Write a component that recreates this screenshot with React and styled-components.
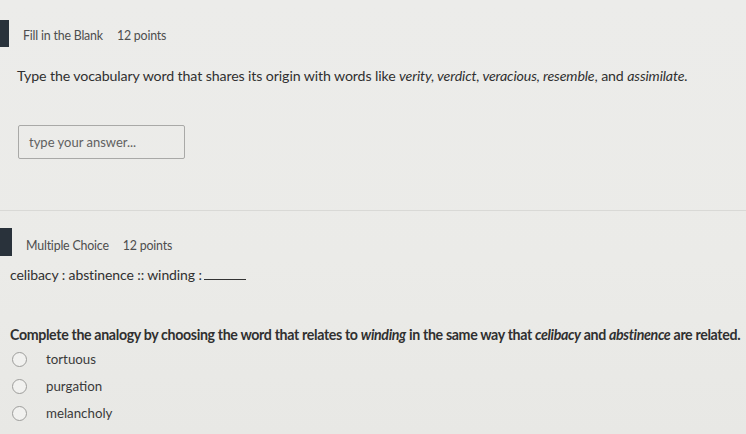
import React from "react";
import styled, { createGlobalStyle } from "styled-components";

const Global = createGlobalStyle`
  html, body { margin: 0; padding: 0; }
  body {
    background: #ebebe9;
    font-family: Lato, "Open Sans", sans-serif;
    color: #3a3a3a;
    width: 746px;
    height: 434px;
    overflow: hidden;
  }
`;

const Page = styled.div`
  width: 746px;
  height: 434px;
  background: linear-gradient(180deg, #ececea 0%, #ebebe8 60%, #e8e8e5 100%);
  display: flex;
  flex-direction: column;
`;

const Section = styled.section`
  display: flex;
  flex-direction: column;
  padding-top: ${(p) => p.$top}px;
`;

const Header = styled.div`
  display: flex;
  align-items: center;
  height: ${(p) => p.$h}px;
`;

const Marker = styled.div`
  width: ${(p) => p.$w}px;
  height: 100%;
  background: #29323b;
  flex: none;
`;

const Meta = styled.span`
  font-size: 12.4px;
  color: #4e4e4e;
  letter-spacing: -0.2px;
  margin-left: ${(p) => p.$ml}px;
  margin-top: ${(p) => p.$mt}px;
`;

const Prompt = styled.p`
  margin: 0;
  margin-top: ${(p) => p.$mt}px;
  padding-left: ${(p) => p.$pl}px;
  font-size: ${(p) => p.$fs || 14}px;
  font-weight: ${(p) => p.$fw || 400};
  color: #303030;
  letter-spacing: ${(p) => p.$ls || 0}px;
  white-space: nowrap;
  em { font-style: italic; }
`;

const AnswerBox = styled.div`
  margin: 41px 0 0 18px;
  width: 167px;
  height: 34px;
  box-sizing: border-box;
  border: 1.5px solid #a9a9a7;
  border-radius: 2px;
  display: flex;
  align-items: center;
  padding-left: 10px;
  font-size: 13px;
  color: #606060;
`;

const Divider = styled.hr`
  margin: 51px 0 0 0;
  border: none;
  height: 1px;
  background: #d9d9d6;
`;

const Blank = styled.span`
  display: inline-block;
  width: 42px;
  border-bottom: 1px solid #333;
  margin-left: 2px;
`;

const Options = styled.div`
  display: flex;
  flex-direction: column;
  gap: 9px;
  margin-top: 7px;
  padding-left: 12px;
`;

const Option = styled.label`
  display: flex;
  align-items: center;
  height: 18px;
  font-size: 13.3px;
  color: #3a3a3a;
`;

const Radio = styled.span`
  width: 15px;
  height: 15px;
  box-sizing: border-box;
  border-radius: 50%;
  border: 1.5px solid #9d9d9b;
  background: #f1f1ef;
  margin-right: 19px;
  flex: none;
`;

export default function App() {
  return (
    <>
      <Global />
      <Page>
        <Section $top={20}>
          <Header $h={27}>
            <Marker $w={9} />
            <Meta $ml={14} $mt={3}>Fill in the Blank</Meta>
            <Meta $ml={14} $mt={3}>12 points</Meta>
          </Header>
          <Prompt $mt={20} $pl={17} $fs={14.2} $ls={-0.12}>
            Type the vocabulary word that shares its origin with words like{" "}
            <em>verity, verdict, veracious, resemble</em>, and <em>assimilate.</em>
          </Prompt>
          <AnswerBox>type your answer...</AnswerBox>
          <Divider />
        </Section>
        <Section $top={17}>
          <Header $h={28}>
            <Marker $w={12} />
            <Meta $ml={14} $mt={6}>Multiple Choice</Meta>
            <Meta $ml={14} $mt={6}>12 points</Meta>
          </Header>
          <Prompt $mt={10} $pl={10} $fs={14} $ls={-0.1}>
            celibacy : abstinence :: winding :<Blank />
          </Prompt>
          <Prompt $mt={43} $pl={10} $fs={14.2} $fw={700} $ls={-0.35}>
            Complete the analogy by choosing the word that relates to <em>winding</em> in
            the same way that <em>celibacy</em> and <em>abstinence</em> are related.
          </Prompt>
          <Options>
            <Option><Radio />tortuous</Option>
            <Option><Radio />purgation</Option>
            <Option><Radio />melancholy</Option>
          </Options>
        </Section>
      </Page>
    </>
  );
}
